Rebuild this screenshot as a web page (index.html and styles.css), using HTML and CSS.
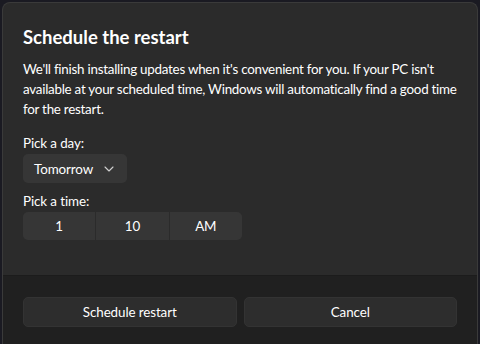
FILE: index.html
```html
<!DOCTYPE html>
<html lang="en">
<head>
	<meta charset="UTF-8">
	<title>Schedule the restart</title>
	<link rel="stylesheet" href="styles.css">
</head>
<body>
	<div class="dialog">
		<div class="content">
			<h1 class="title">Schedule the restart</h1>
			<p class="desc">We'll finish installing updates when it's convenient for you. If your PC isn't available at your scheduled time, Windows will automatically find a good time for the restart.</p>
			<div class="label">Pick a day:</div>
			<div class="combo">
				<span>Tomorrow</span>
				<svg width="10" height="6" viewBox="0 0 10 6"><path d="M1 1 L5 5 L9 1" fill="none" stroke="#cfcfcf" stroke-width="1.1" stroke-linecap="round" stroke-linejoin="round"/></svg>
			</div>
			<div class="label">Pick a time:</div>
			<div class="timepicker">
				<div class="cell">1</div>
				<div class="cell">10</div>
				<div class="cell">AM</div>
			</div>
		</div>
		<div class="footer">
			<button class="btn">Schedule restart</button>
			<button class="btn">Cancel</button>
		</div>
	</div>
</body>
</html>
```

FILE: styles.css
```css
*{margin:0;padding:0;box-sizing:border-box;}
body{background:#1a1a22;font-family:Lato,"Noto Sans",sans-serif;color:#fff;overflow:hidden;height:344px;}
.dialog{margin:2px 2px 0 2px;height:342px;display:flex;flex-direction:column;background:#2b2b2b;border:1px solid #3a3a3a;border-bottom:0;border-radius:8px 8px 0 0;overflow:hidden;}
.content{padding:21px 10px 0 20px;height:272px;font-size:13.4px;letter-spacing:-0.1px;}
.title{font-size:18.5px;font-weight:700;line-height:26px;margin-bottom:9px;letter-spacing:0;}
.desc{line-height:20px;margin-bottom:14px;letter-spacing:-0.25px;}
.label{line-height:20px;margin-bottom:1px;}
.combo{display:inline-flex;align-items:center;gap:11px;height:29px;padding:0 13px 0 11px;background:#363636;border-radius:5px;margin-bottom:8px;}
.combo svg{margin-top:1px;}
.timepicker{display:flex;width:219px;height:28px;margin-top:1px;background:#363636;border-radius:5px;}
.cell{flex:1;display:flex;align-items:center;justify-content:center;border-left:1px solid #2b2b2b;}
.cell:first-child{border-left:0;}
.footer{flex:1;display:flex;gap:7px;padding:21px 20px 0;background:#202020;border-top:1px solid #1c1c1c;}
.btn{flex:1;height:30px;background:#2d2d2d;border:1px solid #333;border-radius:5px;color:#fff;font-family:inherit;font-size:13.4px;letter-spacing:-0.1px;}
```
